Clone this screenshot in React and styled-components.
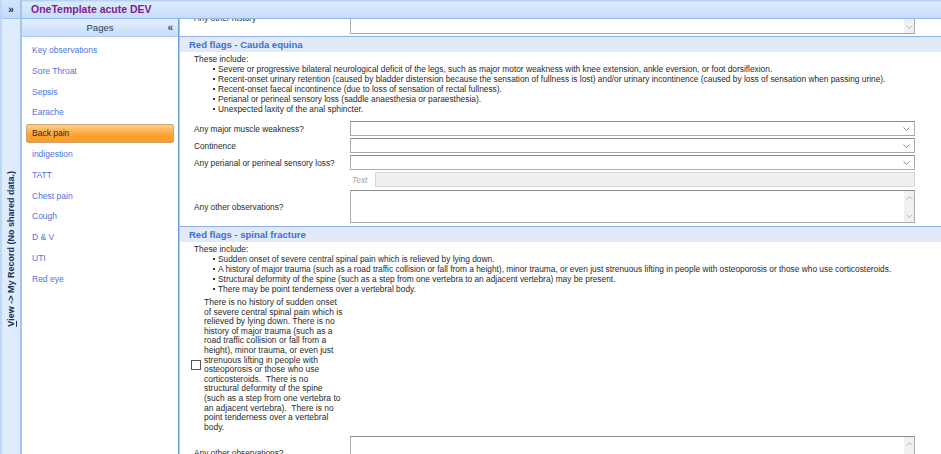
import { useLayoutEffect, useRef } from 'react';
import styled, { createGlobalStyle } from 'styled-components';

// Base page styling
const GlobalStyle = createGlobalStyle`
  html, body { margin: 0; padding: 0; background: #fff; }
  body { font-family: "Liberation Sans", Arial, sans-serif; color: #222; }
`;

const Shell = styled.div`
  display: flex;
  height: 454px;
  width: 941px;
  overflow: hidden;
`;

// Far left collapsed strip
const SideStrip = styled.div`
  width: 18px;
  flex: none;
  display: flex;
  flex-direction: column;
  align-items: center;
  background: #deedfd;
  border-left: 2px solid #bcd7f8;
  border-right: 2px solid #a3c5f0;
`;
const ExpandButton = styled.div`
  width: 100%;
  height: 19px;
  box-sizing: border-box;
  display: flex;
  align-items: center;
  justify-content: center;
  font-size: 10px;
  font-weight: bold;
  color: #1e2d5c;
  background: linear-gradient(#d3e5fb, #c2daf8);
  border-bottom: 1px solid #a3c5f0;
`;
const VerticalLabel = styled.div`
  margin-top: 152px;
  writing-mode: vertical-rl;
  transform: rotate(180deg);
  font-size: 9px;
  font-weight: bold;
  color: #1e2d5c;
  white-space: nowrap;
`;

const Main = styled.div`
  flex: 1;
  display: flex;
  flex-direction: column;
  min-width: 0;
`;
const TitleBar = styled.div`
  height: 19px;
  flex: none;
  box-sizing: border-box;
  display: flex;
  align-items: center;
  padding-left: 9px;
  font-size: 10.5px;
  font-weight: bold;
  color: #80208f;
  background: linear-gradient(#b8d3f6 0, #b8d3f6 1px, #dcebfd 2px, #c6dcf8 100%);
  border-bottom: 1px solid #93b7e8;
`;
const Body = styled.div`
  flex: 1;
  display: flex;
  min-height: 0;
`;

// Pages navigation panel
const PagesPanel = styled.div`
  width: 156px;
  flex: none;
  display: flex;
  flex-direction: column;
  border-right: 1px solid #6f9fdd;
  background: #fff;
`;
const PanelHeader = styled.div`
  height: 18px;
  box-sizing: border-box;
  display: grid;
  grid-template-columns: 1fr auto 1fr;
  align-items: center;
  font-size: 9.5px;
  color: #2c3a58;
  background: linear-gradient(#e3effd, #c8ddf8);
  border-bottom: 1px solid #b3cdf0;
  .collapse {
    justify-self: end;
    padding-right: 5px;
    font-weight: bold;
    font-size: 10px;
    color: #2d4c8c;
  }
`;
const NavList = styled.div`
  display: flex;
  flex-direction: column;
  gap: 1.8px;
  padding: 3.5px 4px 0;
`;
const NavItem = styled.div`
  height: 19px;
  box-sizing: border-box;
  display: flex;
  align-items: center;
  padding-left: 5px;
  font-size: 8.5px;
  border-radius: 2px;
  color: ${p => (p.$active ? '#2a2a2a' : '#4f74dd')};
  border: 1px solid ${p => (p.$active ? '#c9a67a' : 'transparent')};
  background: ${p => (p.$active ? 'linear-gradient(#ffd08a, #ffa436 55%, #ff9c22)' : 'transparent')};
`;

// Form content area
const Content = styled.div`
  flex: 1;
  overflow: hidden;
  border-left: 1px solid #a9c6ee;
  background: #fff;
`;
const SectionHeader = styled.div`
  height: 16px;
  box-sizing: border-box;
  display: flex;
  align-items: center;
  padding-left: 9px;
  font-size: 9.5px;
  font-weight: bold;
  color: #3b6fd6;
  background: #e2eaf8;
  border-top: 1px solid #8fb0ea;
`;
const Notes = styled.div`
  padding: 2px 0 0 14px;
  font-size: 8.35px;
  line-height: 10px;
  color: #2a2a2a;
`;
const BulletList = styled.ul`
  list-style: none;
  margin: 0;
  padding: 0 0 0 19px;
  li::before {
    content: '';
    display: inline-block;
    width: 2px;
    height: 2px;
    background: #333;
    margin: 0 3px 2px 0;
  }
`;
const Fields = styled.div`
  padding-top: ${p => p.$top || 0}px;
`;
const FieldRow = styled.div`
  display: flex;
  align-items: center;
  padding: ${p => p.$pad || '1px 0'};
  padding-left: 14px;
  padding-right: 26px;
`;
const Label = styled.div`
  width: 156px;
  flex: none;
  font-size: 8.3px;
  color: #2a2a2a;
`;
const HintLabel = styled.div`
  width: 25px;
  flex: none;
  padding-left: 2px;
  box-sizing: border-box;
  font-size: 8.3px;
  font-style: italic;
  color: #a3a3a3;
`;
const SelectBox = styled.div`
  flex: 1;
  height: 15px;
  box-sizing: border-box;
  display: flex;
  align-items: center;
  justify-content: flex-end;
  padding-right: 4px;
  background: #fff;
  border: 1px solid #aaa;
  border-top-color: #8c8c8c;
`;
const TextInput = styled.div`
  flex: 1;
  height: 15px;
  box-sizing: border-box;
  background: #efefef;
  border: 1px solid #d8d8d8;
`;
const TextArea = styled.div`
  flex: 1;
  height: 33px;
  box-sizing: border-box;
  display: flex;
  justify-content: flex-end;
  background: #fff;
  border: 1px solid #aaa;
  border-top-color: #8c8c8c;
`;
const ScrollTrack = styled.div`
  width: 10px;
  display: flex;
  flex-direction: column;
  align-items: center;
  justify-content: space-between;
  padding: 5px 0 4px;
  background: #f0f0f0;
`;
const CheckRow = styled.div`
  display: flex;
  align-items: center;
  padding: 4px 0 2px 11px;
`;
const CheckBox = styled.div`
  width: 10px;
  height: 10px;
  flex: none;
  box-sizing: border-box;
  border: 1px solid #555;
  background: #fff;
  margin-right: 3px;
`;
const CheckText = styled.div`
  width: 146px;
  font-size: 8.5px;
  line-height: 9.6px;
  color: #2a2a2a;
  span {
    display: block;
    white-space: pre;
  }
`;

const Chevron = ({ up, color = '#8a8a8a' }) => (
  <svg width="7" height="4" viewBox="0 0 7 4">
    <path d={up ? 'M0.5 3.5 L3.5 0.5 L6.5 3.5' : 'M0.5 0.5 L3.5 3.5 L6.5 0.5'} fill="none" stroke={color} strokeWidth="1" />
  </svg>
);

const Select = () => (
  <SelectBox><Chevron /></SelectBox>
);

const MultiLine = () => (
  <TextArea>
    <ScrollTrack>
      <Chevron up color="#b8b8b8" />
      <Chevron color="#b8b8b8" />
    </ScrollTrack>
  </TextArea>
);

const pages = ['Key observations', 'Sore Throat', 'Sepsis', 'Earache', 'Back pain', 'indigestion', 'TATT', 'Chest pain', 'Cough', 'D & V', 'UTI', 'Red eye'];

const caudaEquina = [
  'Severe or progressive bilateral neurological deficit of the legs, such as major motor weakness with knee extension, ankle eversion, or foot dorsiflexion.',
  'Recent-onset urinary retention (caused by bladder distension because the sensation of fullness is lost) and/or urinary incontinence (caused by loss of sensation when passing urine).',
  'Recent-onset faecal incontinence (due to loss of sensation of rectal fullness).',
  'Perianal or perineal sensory loss (saddle anaesthesia or paraesthesia).',
  'Unexpected laxity of the anal sphincter.',
];

const spinalFracture = [
  'Sudden onset of severe central spinal pain which is relieved by lying down.',
  'A history of major trauma (such as a road traffic collision or fall from a height), minor trauma, or even just strenuous lifting in people with osteoporosis or those who use corticosteroids.',
  'Structural deformity of the spine (such as a step from one vertebra to an adjacent vertebra) may be present.',
  'There may be point tenderness over a vertebral body.',
];

// wrapped as in the original form
const noFractureLines = [
  'There is no history of sudden onset',
  'of severe central spinal pain which is',
  'relieved by lying down. There is no',
  'history of major trauma (such as a',
  'road traffic collision or fall from a',
  'height), minor trauma, or even just',
  'strenuous lifting in people with',
  'osteoporosis or those who use',
  'corticosteroids.  There is no',
  'structural deformity of the spine',
  '(such as a step from one vertebra to',
  'an adjacent vertebra).  There is no',
  'point tenderness over a vertebral',
  'body.',
];

const Notice = ({ items }) => (
  <Notes>
    These include:
    <BulletList>
      {items.map(t => <li key={t}>{t}</li>)}
    </BulletList>
  </Notes>
);

const App = () => {
  const scrollRef = useRef(null);

  // the form is shown scrolled down a little
  useLayoutEffect(() => {
    if (scrollRef.current) scrollRef.current.scrollTop = 19;
  }, []);

  return (
    <>
      <GlobalStyle />
      <Shell>
        <SideStrip>
          <ExpandButton>»</ExpandButton>
          <VerticalLabel><u>V</u>iew -&gt; My Record (No shared data.)</VerticalLabel>
        </SideStrip>
        <Main>
          <TitleBar>OneTemplate acute DEV</TitleBar>
          <Body>
            <PagesPanel>
              <PanelHeader>
                <span />
                <span>Pages</span>
                <span className="collapse">«</span>
              </PanelHeader>
              <NavList>
                {pages.map(p => (
                  <NavItem key={p} $active={p === 'Back pain'}>{p}</NavItem>
                ))}
              </NavList>
            </PagesPanel>
            <Content ref={scrollRef}>
              <FieldRow $pad="1px 0 2px">
                <Label>Any other history</Label>
                <MultiLine />
              </FieldRow>

              <SectionHeader>Red flags - Cauda equina</SectionHeader>
              <Notice items={caudaEquina} />
              <Fields $top={6}>
                <FieldRow>
                  <Label>Any major muscle weakness?</Label>
                  <Select />
                </FieldRow>
                <FieldRow>
                  <Label>Continence</Label>
                  <Select />
                </FieldRow>
                <FieldRow>
                  <Label>Any perianal or perineal sensory loss?</Label>
                  <Select />
                </FieldRow>
                <FieldRow>
                  <Label />
                  <HintLabel>Text</HintLabel>
                  <TextInput />
                </FieldRow>
                <FieldRow $pad="2px 0 3px">
                  <Label>Any other observations?</Label>
                  <MultiLine />
                </FieldRow>
              </Fields>

              <SectionHeader>Red flags - spinal fracture</SectionHeader>
              <Notice items={spinalFracture} />
              <CheckRow>
                <CheckBox />
                <CheckText>
                  {noFractureLines.map((l, i) => <span key={i}>{l}</span>)}
                </CheckText>
              </CheckRow>
              <FieldRow $pad="2px 0 20px">
                <Label>Any other observations?</Label>
                <MultiLine />
              </FieldRow>
            </Content>
          </Body>
        </Main>
      </Shell>
    </>
  );
};

export default App;
